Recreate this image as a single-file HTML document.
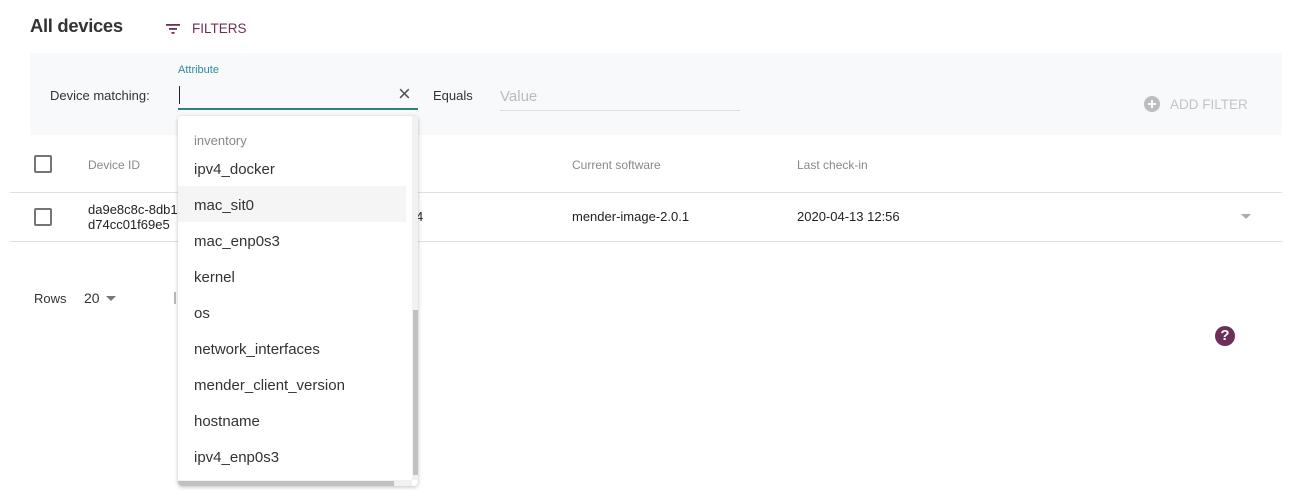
<!DOCTYPE html>
<html><head><meta charset="utf-8"><style>
*{margin:0;padding:0;box-sizing:border-box}
body{width:1294px;height:499px;background:#fff;font-family:"Liberation Sans",sans-serif;position:relative;overflow:hidden;color:#222}
.a{position:absolute;white-space:nowrap}
.cb{position:absolute;width:18px;height:18px;border:2px solid #757575;border-radius:2px}
.item{position:absolute;left:0;width:228px;height:36px;padding-left:16px;line-height:36px;font-size:15px;color:#333}
</style></head><body>
<div class="a" style="left:30px;top:15px;font-size:18.4px;font-weight:bold;color:#333;letter-spacing:-0.3px">All devices</div>
<svg class="a" style="left:166px;top:23px" width="14" height="12" viewBox="0 0 14 12"><rect x="0" y="1" width="14" height="1.8" fill="#6d2f58"/><rect x="3" y="5" width="8" height="1.8" fill="#6d2f58"/><rect x="5.5" y="9" width="3" height="1.8" fill="#6d2f58"/></svg>
<div class="a" style="left:192px;top:21px;font-size:13.5px;color:#6d2f58">FILTERS</div>

<div class="a" style="left:30px;top:53px;width:1252px;height:82px;background:#f7f9fb"></div>
<div class="a" style="left:50px;top:88px;font-size:13px;color:#333">Device matching:</div>
<div class="a" style="left:178px;top:64px;font-size:11px;color:#2f8a9b">Attribute</div>
<div class="a" style="left:179px;top:86px;width:1px;height:18px;background:#222"></div>
<div class="a" style="left:398px;top:81px;font-size:22px;color:#555;font-weight:300">×</div>
<div class="a" style="left:178px;top:108px;width:240px;height:2px;background:#347a87"></div>
<div class="a" style="left:433px;top:88px;font-size:13px;color:#333">Equals</div>
<div class="a" style="left:500px;top:88px;font-size:15px;color:#bbb">Value</div>
<div class="a" style="left:500px;top:110px;width:240px;height:1px;background:#ddd"></div>
<svg class="a" style="left:1144px;top:96px" width="16" height="16" viewBox="0 0 16 16"><circle cx="8" cy="8" r="8" fill="#bdbdbd"/><rect x="4" y="7" width="8" height="2" fill="#fff"/><rect x="7" y="4" width="2" height="8" fill="#fff"/></svg>
<div class="a" style="left:1170px;top:97px;font-size:13.5px;color:#c4c4c4">ADD FILTER</div>

<div class="cb" style="left:34px;top:155px"></div>
<div class="a" style="left:88px;top:158px;font-size:12px;color:#888">Device ID</div>
<div class="a" style="left:572px;top:158px;font-size:12px;color:#888">Current software</div>
<div class="a" style="left:797px;top:158px;font-size:12px;color:#888">Last check-in</div>
<div class="a" style="left:10px;top:192px;width:1272px;height:1px;background:#e0e0e0"></div>
<div class="cb" style="left:34px;top:208px"></div>
<div class="a" style="left:88px;top:202px;font-size:13px;line-height:15px;color:#222">da9e8c8c-8db1<br>d74cc01f69e5</div>
<div class="a" style="left:416px;top:209px;font-size:13px">4</div>
<div class="a" style="left:572px;top:209px;font-size:13px">mender-image-2.0.1</div>
<div class="a" style="left:797px;top:209px;font-size:13px">2020-04-13 12:56</div>
<div class="a" style="left:1241px;top:214px;width:0;height:0;border-left:5px solid transparent;border-right:5px solid transparent;border-top:5px solid #aaa"></div>
<div class="a" style="left:10px;top:241px;width:1272px;height:1px;background:#e0e0e0"></div>

<div class="a" style="left:34px;top:291px;font-size:13px;color:#333">Rows</div>
<div class="a" style="left:84px;top:290px;font-size:14px;color:#333">20</div>
<div class="a" style="left:106px;top:296px;width:0;height:0;border-left:5px solid transparent;border-right:5px solid transparent;border-top:5px solid #777"></div>
<div class="a" style="left:174px;top:292px;width:2px;height:12px;background:#bbb"></div>
<div class="a" style="left:1215px;top:326px;width:20px;height:20px;border-radius:50%;background:#6d2f58;color:#fff;font-weight:bold;font-size:15px;text-align:center;line-height:20px">?</div>

<div class="a" style="left:178px;top:116px;width:240px;height:370px;background:#fff;border-radius:4px;box-shadow:0 1px 4px rgba(0,0,0,.25);overflow:hidden">
 <div class="a" style="left:16px;top:17px;font-size:13px;color:#888">inventory</div>
 <div class="item" style="top:36px">ipv4_docker</div>
 <div class="a" style="left:0;top:70px;width:228px;height:36px;background:#f5f5f5"></div>
 <div class="item" style="top:72px">mac_sit0</div>
 <div class="item" style="top:108px">mac_enp0s3</div>
 <div class="item" style="top:144px">kernel</div>
 <div class="item" style="top:180px">os</div>
 <div class="item" style="top:216px">network_interfaces</div>
 <div class="item" style="top:252px">mender_client_version</div>
 <div class="item" style="top:288px">hostname</div>
 <div class="item" style="top:324px">ipv4_enp0s3</div>
 <div class="a" style="left:234px;top:0;width:6px;height:364px;background:#f1f1f1"></div>
 <div class="a" style="left:235px;top:194px;width:5px;height:165px;background:#c1c1c1"></div>
 <div class="a" style="left:0;top:364px;width:234px;height:6px;background:#f1f1f1"></div>
 <div class="a" style="left:0;top:365px;width:216px;height:5px;background:#c1c1c1"></div>
</div>
</body></html>
